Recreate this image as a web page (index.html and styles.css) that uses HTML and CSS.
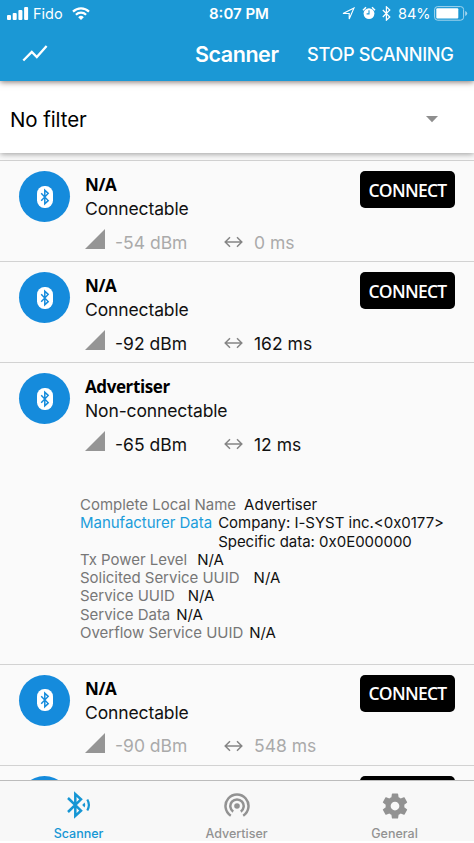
FILE: index.html
```html
<!DOCTYPE html>
<html lang="en">
<head>
<meta charset="utf-8">
<title>Scanner</title>
<link rel="stylesheet" href="styles.css">
</head>
<body>
<svg class="defs" width="0" height="0" aria-hidden="true">
  <symbol id="bt" viewBox="0 0 16 22"><rect width="16" height="22" rx="7.5" fill="#fff"/><path d="M4.2 7.2l7 7.4-3.4 3.2V4.2l3.4 3.2-7 7.4" fill="none" stroke="#158bdc" stroke-width="1.5"/></symbol>
  <symbol id="signal" viewBox="0 0 20 20"><path d="M0 20L20 0v20z" fill="#959595"/></symbol>
  <symbol id="interval" viewBox="0 0 19 12"><path d="M1.5 6h16M6 1.2L1.2 6 6 10.8M13 1.2L17.8 6 13 10.8" fill="none" stroke="#858585" stroke-width="1.5"/></symbol>
</svg>
<div class="screen">
  <header class="header">
    <div class="status">
      <svg class="bars" width="22" height="13" viewBox="0 0 22 13" fill="#fff"><rect y="8" width="4" height="5" rx="1"/><rect x="5.7" y="6" width="4" height="7" rx="1"/><rect x="11.4" y="3" width="4" height="10" rx="1"/><rect x="17.1" width="4" height="13" rx="1"/></svg>
      <span class="carrier">Fido</span>
      <svg class="wifi" width="18" height="13" viewBox="0 0 18 13" fill="none" stroke="#fff" stroke-width="2.2"><path d="M1 4.6a11.5 11.5 0 0 1 16 0M3.9 7.8a7.3 7.3 0 0 1 10.2 0"/><path d="M9 13L6.2 10.2a4 4 0 0 1 5.6 0z" fill="#fff" stroke="none"/></svg>
      <span class="clock">8:07 PM</span>
      <svg class="loc" width="13" height="13" viewBox="0 0 13 13"><path d="M1 6.5L12 1 7.2 12V6.5z" fill="none" stroke="#fff" stroke-width="1.1"/></svg>
      <svg class="alarm" width="14" height="14" viewBox="0 0 14 14"><circle cx="7" cy="7.6" r="5.4" fill="#fff"/><path d="M1 4.2L4 1.3M10 1.3l3 2.9" stroke="#fff" stroke-width="1.5"/><path d="M7 4.3v3.6H4.6" fill="none" stroke="#1b98d5" stroke-width="1.1"/></svg>
      <svg class="sbt" width="9" height="15" viewBox="0 0 9 15"><path d="M.8 4l7 7-3.4 3.2V.8L7.8 4l-7 7" fill="none" stroke="#fff" stroke-width="1.2"/></svg>
      <span class="percent">84%</span>
      <svg class="battery" width="34" height="15" viewBox="0 0 34 15"><rect x=".6" y=".6" width="29" height="13.6" rx="3" fill="none" stroke="#a4d6ee" stroke-width="1"/><rect x="2.3" y="2.3" width="22" height="10.2" rx="1" fill="#fff"/><path d="M31.2 5v5q2-.8 2-2.5t-2-2.5" fill="#a4d6ee"/></svg>
    </div>
    <div class="toolbar">
      <svg class="chart" width="26" height="17" viewBox="0 0 26 17"><path d="M1.3 15.5L9.8 7l5 5L24.6 1" fill="none" stroke="#fff" stroke-width="2.3"/></svg>
      <h1 class="title">Scanner</h1>
      <span class="stop">STOP SCANNING</span>
    </div>
  </header>
  <div class="filter"><span>No filter</span><svg width="12" height="7" viewBox="0 0 12 7"><path d="M0 0h12L6 6.3z" fill="#8e8e8e"/></svg></div>
  <main class="list">
    <section class="row">
      <div class="avatar"><svg width="16" height="22"><use href="#bt"/></svg></div>
      <div class="info"><div class="name">N/A</div><div class="state">Connectable</div>
        <div class="metrics dim"><svg width="20" height="20"><use href="#signal"/></svg><span class="rssi">-54 dBm</span><svg class="arrows" width="19" height="12"><use href="#interval"/></svg><span>0 ms</span></div></div>
      <div class="connect"><span>CONNECT</span></div>
    </section>
    <section class="row">
      <div class="avatar"><svg width="16" height="22"><use href="#bt"/></svg></div>
      <div class="info"><div class="name">N/A</div><div class="state">Connectable</div>
        <div class="metrics"><svg width="20" height="20"><use href="#signal"/></svg><span class="rssi">-92 dBm</span><svg class="arrows" width="19" height="12"><use href="#interval"/></svg><span>162 ms</span></div></div>
      <div class="connect"><span>CONNECT</span></div>
    </section>
    <section class="row expanded">
      <div class="avatar"><svg width="16" height="22"><use href="#bt"/></svg></div>
      <div class="info"><div class="name adv">Advertiser</div><div class="state">Non-connectable</div>
        <div class="metrics"><svg width="20" height="20"><use href="#signal"/></svg><span class="rssi">-65 dBm</span><svg class="arrows" width="19" height="12"><use href="#interval"/></svg><span>12 ms</span></div></div>
      <dl class="details">
        <div class="g8"><dt>Complete Local Name</dt><dd>Advertiser</dd></div>
        <div class="g6 tall"><dt class="link">Manufacturer Data</dt><dd>Company: I-SYST inc.&lt;0x0177&gt;<br>Specific data: 0x0E000000</dd></div>
        <div class="g11"><dt>Tx Power Level</dt><dd>N/A</dd></div>
        <div class="g14"><dt>Solicited Service UUID</dt><dd>N/A</dd></div>
        <div class="g13"><dt>Service UUID</dt><dd>N/A</dd></div>
        <div class="g6"><dt>Service Data</dt><dd>N/A</dd></div>
        <div class="g6"><dt>Overflow Service UUID</dt><dd>N/A</dd></div>
      </dl>
    </section>
    <section class="row">
      <div class="avatar"><svg width="16" height="22"><use href="#bt"/></svg></div>
      <div class="info"><div class="name">N/A</div><div class="state">Connectable</div>
        <div class="metrics dim"><svg width="20" height="20"><use href="#signal"/></svg><span class="rssi">-90 dBm</span><svg class="arrows" width="19" height="12"><use href="#interval"/></svg><span>548 ms</span></div></div>
      <div class="connect"><span>CONNECT</span></div>
    </section>
    <section class="row">
      <div class="avatar"></div><div class="info"></div><div class="connect"></div>
    </section>
  </main>
  <nav class="tabs">
    <div class="tab active"><svg width="26" height="28" viewBox="0 0 26 28" fill="none" stroke="#1696d4" stroke-width="2.5"><path d="M2 7l13 12.7-5.7 5.3V3l5.7 5.3L2 21"/><path d="M16.2 14l2.4-2.4q1.3 2.4 0 4.8z" fill="#1696d4" stroke="none"/><path d="M21.3 8.5q3.2 5.5 0 11" stroke-width="2.2"/></svg><span>Scanner</span></div>
    <div class="tab mid"><svg width="26" height="28" viewBox="0 0 26 28" fill="none" stroke="#929292" stroke-width="2.5"><circle cx="13" cy="15" r="2.8" fill="#929292" stroke="none"/><path d="M9.2 20.6a6.7 6.7 0 1 1 7.6 0M6.8 24.7a11.5 11.5 0 1 1 12.4 0"/></svg><span>Advertiser</span></div>
    <div class="tab"><svg width="30" height="30" viewBox="0 0 24 24" fill="#929292"><path d="M19.43 12.98c.04-.32.07-.64.07-.98s-.03-.66-.07-.98l2.11-1.65c.19-.15.24-.42.12-.64l-2-3.46c-.12-.22-.39-.3-.61-.22l-2.49 1c-.52-.4-1.08-.73-1.69-.98l-.38-2.65C14.46 2.18 14.25 2 14 2h-4c-.25 0-.46.18-.49.42l-.38 2.65c-.61.25-1.17.59-1.69.98l-2.49-1c-.23-.09-.49 0-.61.22l-2 3.46c-.13.22-.07.49.12.64l2.11 1.65c-.04.32-.07.65-.07.98s.03.66.07.98l-2.11 1.65c-.19.15-.24.42-.12.64l2 3.46c.12.22.39.3.61.22l2.49-1c.52.4 1.08.73 1.69.98l.38 2.65c.03.24.24.42.49.42h4c.25 0 .46-.18.49-.42l.38-2.65c.61-.25 1.17-.59 1.69-.98l2.49 1c.23.09.49 0 .61-.22l2-3.46c.12-.22.07-.49-.12-.64l-2.11-1.65zM12 15.5c-1.93 0-3.5-1.57-3.5-3.5s1.57-3.5 3.5-3.5 3.5 1.57 3.5 3.5-1.57 3.5-3.5 3.5z"/></svg><span>General</span></div>
  </nav>
</div>
</body>
</html>
```
FILE: styles.css
```css
* { box-sizing: border-box; }
body { margin: 0; background: #fff; font-family: Inter, "Liberation Sans", sans-serif; color: #111; }
.defs { display: block; height: 0; }
svg { flex: none; display: block; }
.screen { width: 474px; height: 841px; display: flex; flex-direction: column; background: #fafafa; overflow: hidden; }
.header { height: 81px; flex: none; background: #1b98d5; color: #fff; box-shadow: 0 1px 6px #7f706c; z-index: 3; }
.status { height: 26px; display: flex; align-items: center; padding-left: 7px; font-size: 14.5px; white-space: nowrap; }
.carrier { width: 32px; margin-left: 4px; }
.wifi { margin-left: 7px; }
.clock { width: 66px; margin-left: 119px; font-weight: 600; font-size: 15px; }
.loc { margin-left: 67px; }
.alarm { margin-left: 7px; }
.sbt { margin-left: 6px; }
.percent { width: 33px; margin-left: 7px; font-size: 14.5px; }
.battery { margin-left: 3px; }
.toolbar { height: 55px; display: flex; align-items: center; padding-left: 22px; }
.title { margin: 0 0 0 147px; width: 84px; font-size: 21.5px; line-height: 26px; font-weight: 600; letter-spacing: -.45px; white-space: nowrap; }
.stop { margin-left: 28px; font-size: 18.2px; font-weight: 500; letter-spacing: -.35px; white-space: nowrap; }
.filter { height: 72px; flex: none; background: #fff; display: flex; align-items: center; justify-content: space-between; padding: 4px 36px 0 10px; font-size: 20.5px; letter-spacing: -.1px; color: #000; box-shadow: 0 1px 6px #999; z-index: 2; }
.list { height: 620px; flex: none; margin-top: 7px; border-top: 1px solid #d2d2d2; overflow: hidden; }
.row { height: 101.1px; border-bottom: 1px solid #d2d2d2; padding: 10px 19px 0; display: grid; grid-template-columns: 66px 1fr 95px; align-content: start; }
.row.expanded { height: 301.5px; }
.avatar { width: 51px; height: 51px; border-radius: 50%; background: #158bdc; display: flex; align-items: center; justify-content: center; }
.info { white-space: nowrap; }
.name { height: 26px; line-height: 28px; font-family: "Open Sans", sans-serif; font-weight: 700; font-size: 17px; letter-spacing: -.4px; color: #000; }
.state { height: 22px; line-height: 24px; font-size: 17.5px; letter-spacing: -.12px; }
.metrics { height: 22px; margin-top: 12px; display: flex; align-items: center; font-size: 17.5px; }
.metrics > svg:first-child { margin-top: -6px; }
.dim { color: #aaa; }
.rssi { width: 72px; margin-left: 10px; }
.arrows { margin: 0 11px 0 37px; }
.connect { height: 37px; border-radius: 5px; background: #000; color: #fff; display: flex; align-items: center; justify-content: center; font: 600 17.5px "Open Sans", sans-serif; letter-spacing: -.7px; }
.details { grid-column: 1 / -1; margin: 41px 0 0 61px; font-size: 15px; line-height: 18.3px; white-space: nowrap; letter-spacing: -.02px; }
.details > div { display: flex; height: 18.3px; }
.details > .tall { height: 36.3px; }
.details dt { color: #777; }
.details dt.link { color: #1b9ddb; }
.details dd { margin: 0; }
.g6 { gap: 6px; } .g8 { gap: 8px; } .g11 { gap: 10px; } .g13 { gap: 13px; } .g14 { gap: 14px; }
.tabs { height: 61px; flex: none; border-top: 1px solid #bcbcbc; background: #f8f8f8; display: grid; grid-template-columns: 157px 159px 157px; color: #929292; font-size: 12.5px; font-weight: 500; }
.tab { height: 60px; display: flex; flex-direction: column; align-items: center; justify-content: space-between; padding: 10px 0 0; }
.tab span { line-height: 15px; }
.active { color: #1696d4; }
```
